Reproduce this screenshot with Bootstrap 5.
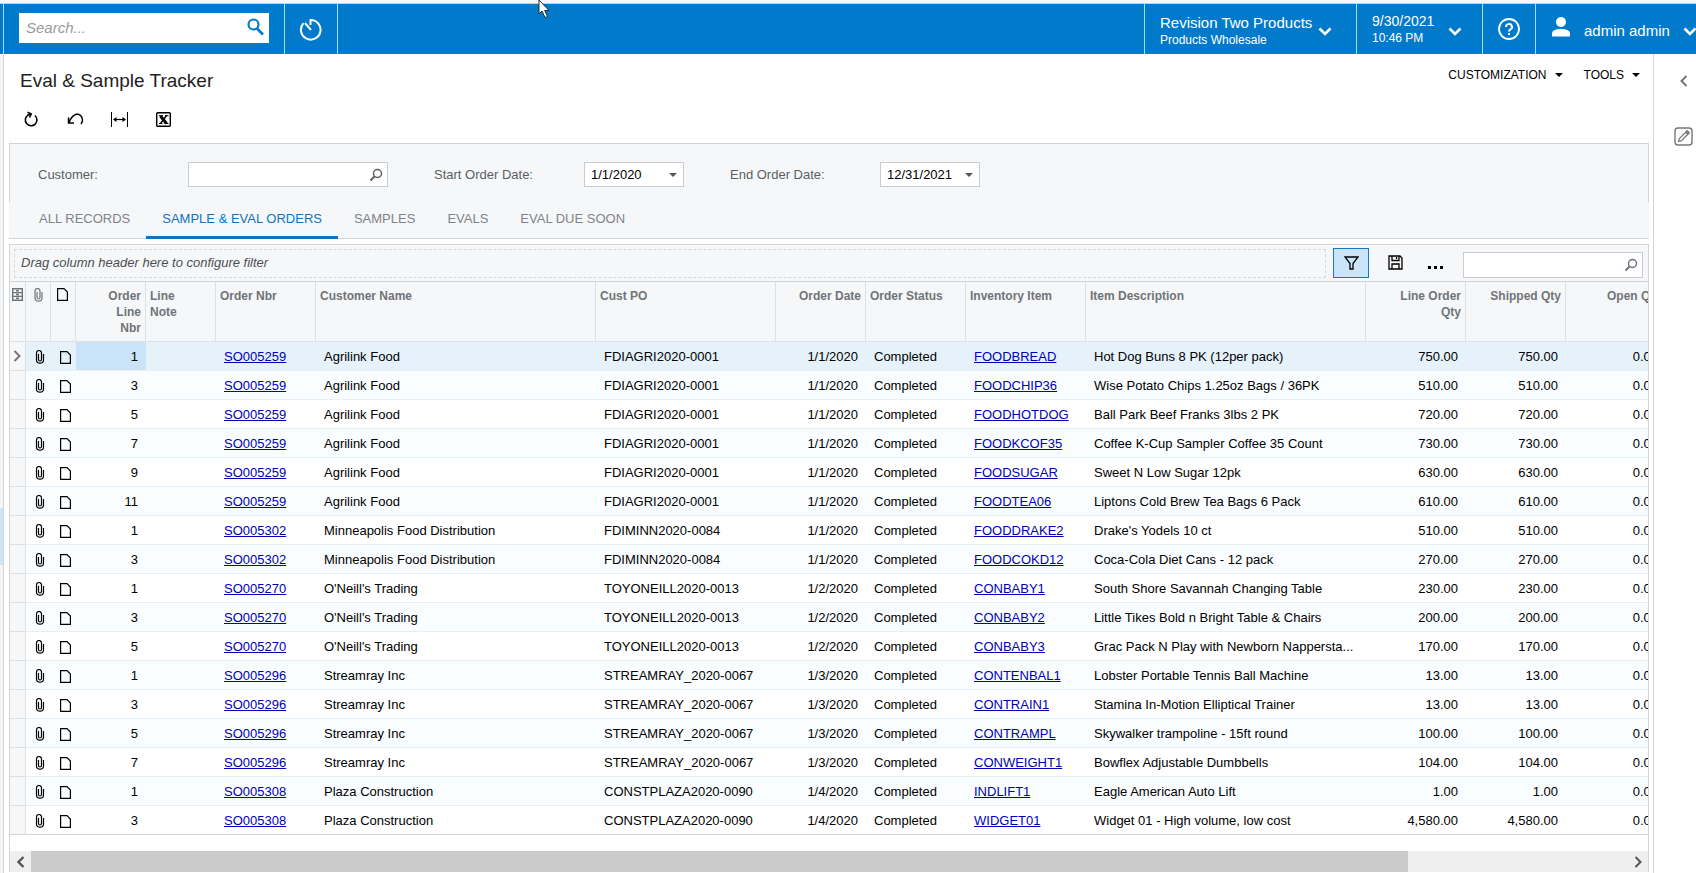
<!DOCTYPE html>
<html lang="en">
<head>
<meta charset="utf-8">
<meta name="viewport" content="width=device-width, initial-scale=1">
<title>Eval &amp; Sample Tracker</title>
<link href="https://cdn.jsdelivr.net/npm/bootstrap@5.3.0/dist/css/bootstrap.min.css" rel="stylesheet">
<style>
  :root { --brand: #027acc; --panel: #f5f7f9; --line: #d2d4d6; --cell: #dde1e5; }
  body { font-family: "Liberation Sans", Arial, sans-serif; font-size: 13px; line-height: 16px; color: #000; background: #fff; }
  svg { display: block; flex: none; fill: none; stroke: currentColor; }
  button { font: inherit; color: inherit; background: none; border: 0; padding: 0; }
  input { font: inherit; color: #000; border: 0; background: transparent; outline: 0; min-width: 0; padding: 0; }

  .window-edge { height: 4px; background: #f6f6f6; border-bottom: 1px solid #c8cdd2; }
  .pointer { position: absolute; left: 538px; top: 0; z-index: 5; }
  .topbar { height: 50px; background: var(--brand); color: #fff; padding-left: 3px; }
  .topbar > * { border-left: 1px solid #a9dcf5; }
  .global-search { width: 281px; padding: 9px 15px 11px; }
  .global-search .field { background: #fff; padding: 0 5px 2px 7px; color: var(--brand); }
  .global-search input { font-size: 15px; font-style: italic; color: #000; padding-top: 2px; }
  .global-search input::placeholder { color: #9a9a9a; opacity: 1; }
  .icon-seg { width: 53px; }
  .org-seg { width: 212px; padding: 4px 24px 0 15px; }
  .date-seg { width: 126px; padding: 0 20px 0 15px; }
  .user-seg { width: 161px; padding-left: 15px; gap: 13px; }
  .seg-main { font-size: 15px; line-height: 18px; }
  .seg-date { font-size: 14px; line-height: 18px; }
  .seg-sub { font-size: 12px; line-height: 16px; }

  .left-rail { width: 4px; background: #f4f5f6; border-right: 1px solid var(--line); padding-top: 454px; }
  .left-mark { height: 57px; background: #cde4f7; }
  .right-rail { width: 43px; border-left: 1px solid var(--line); color: #777; padding: 21px 0 0 20px; }
  .right-rail button + button { margin: 40px 0 0 0; }
  .right-rail button:first-child { margin-left: 6px; }
  .work { padding: 0 4px 0 5px; }
  .title-row { padding: 13px 9px 0 11px; height: 46px; }
  .title-row h1 { font-size: 19px; line-height: 28px; font-weight: 400; color: #222; }
  .title-menu { font-size: 12px; gap: 21px; }
  .title-menu button { gap: 8px; }
  .caret { border: 4px solid transparent; border-top-color: currentColor; border-bottom: 0; width: 0; height: 0; }
  .toolbar { height: 43px; padding: 5px 8px 0; gap: 16px; }
  .tool { width: 28px; height: 28px; display: flex; align-items: center; justify-content: center; }

  .criteria { background: var(--panel); border: 1px solid var(--line); border-bottom: 0; height: 59px; padding: 18px 28px 0; gap: 46px; color: #5b5f63; }
  .criteria label { width: 150px; }
  .field-box { background: #fff; border: 1px solid #c9ccd0; height: 25px; }
  .w-long { width: 200px; padding: 0 4px; }
  .w-date { width: 100px; padding: 0 6px; color: #555; }
  .view-tabs { background: var(--panel); height: 37px; border-bottom: 1px solid var(--line); padding-left: 14px; flex-wrap: nowrap; }
  .view-tabs .nav-link { font-size: 13px; line-height: 18px; padding: 8px 16px; height: 37px; color: #808488; border-bottom: 3px solid transparent; }
  .view-tabs .nav-link.active { color: #1273bb; border-color: #1273bb; }

  .grid-panel { border: 1px solid var(--line); border-bottom: 0; margin-top: 5px; }
  .band { background: var(--panel); }
  .filter-row { height: 37px; border-bottom: 1px solid var(--line); padding: 3px 5px 3px 4px; }
  .drop-zone { border: 1px dashed #d6d8da; height: 29px; margin-top: 1px; padding: 5px 6px; font-style: italic; color: #4c4f52; }
  .filter-tools { gap: 12px; margin: 0 14px 0 7px; }
  .btn-filter { width: 36px; height: 30px; background: #cbe4f7; border: 1px solid #1379c0; }
  .quick { width: 180px; height: 26px; padding: 0 4px; }
  .grid-table { width: 1655px; table-layout: fixed; border-collapse: separate; border-spacing: 0; color: #000; }
  .grid-table > :not(caption) > * > * { box-shadow: none; white-space: nowrap; overflow: hidden; text-overflow: ellipsis; }
  .grid-table thead th { font-size: 12px; height: 60px; padding: 6px 4px 0; vertical-align: top; color: #707478; background: var(--panel); border-right: 1px solid var(--cell); border-bottom: 1px solid var(--cell); text-overflow: clip; }
  .grid-table tbody td { height: 29px; padding: 2px 8px 0; vertical-align: middle; border-bottom: 1px solid #e6f0f7; }
  .grid-table tbody tr:nth-child(even) td { background: #fafdff; }
  .grid-table tbody tr:first-child td { background: #e5f2fa; }
  .grid-table tbody tr td:first-child { background: var(--panel); border-right: 1px solid var(--cell); border-bottom-color: var(--cell); padding: 0 3px; color: #777; }
  .grid-table tbody tr:first-child td.picked { background: #cbe3f6; }
  .grid-table tbody tr:last-child td { border-bottom-color: var(--line); }
  .grid-table a { color: #0000b4; text-decoration: underline; text-underline-offset: 1px; }
  .grid-table th.ico { padding: 6px 0 0 6px; }
  .grid-table th.ico.first { padding-left: 2px; }
  .grid-table td.ico { padding: 2px 0 0 9px; }
  .hscroll { margin-top: 16px; height: 21px; background: #efefef; color: #555; }
  .hscroll button { width: 21px; display: flex; align-items: center; justify-content: center; }
  .hscroll .thumb { background: #cbcbcb; flex: 63 0 0; }
  .hscroll .rest { flex: 10 0 0; }
</style>
</head>
<body class="overflow-hidden min-vh-100 d-flex flex-column position-relative">

<svg width="0" height="0" class="position-absolute" aria-hidden="true">
  <symbol id="clip" viewBox="0 0 10 14"><path d="M3.500 4v5.500a1.500 1.500 0 0 0 3 0V3a2.200 2.200 0 0 0-5 0v7a3.500 3.200 0 0 0 7 0V4" stroke-width="1.200"/></symbol>
  <symbol id="note" viewBox="0 0 11 13"><path d="M.6 .6h6.400l3.400 3.400v8.400H.6z" stroke-width="1.200"/></symbol>
  <symbol id="lens" viewBox="0 0 14 14"><circle cx="8.500" cy="5.500" r="4" stroke-width="1.500"/><path d="M5.500 8.500L1.500 12.500" stroke-width="2"/></symbol>
  <symbol id="down" viewBox="0 0 14 9"><path d="M1.500 1.500L7 7l5.500-5.500" stroke-width="2.600"/></symbol>
  <symbol id="right" viewBox="0 0 8 12"><path d="M1.500 1L6.500 6l-5 5" stroke-width="2"/></symbol>
</svg>

<div class="window-edge"></div>
<svg class="pointer" width="13" height="19" viewBox="0 0 13 19" aria-hidden="true"><path d="M1 0v14l3-3 3 6.500 2.500-1L6.700 10.500H11z" fill="#fff" stroke="#1b2c3c"/></svg>

<header class="topbar d-flex">
  <form class="global-search">
    <div class="field d-flex align-items-center h-100">
      <input class="flex-grow-1" type="search" placeholder="Search..." aria-label="Search">
      <svg width="17" height="18" viewBox="0 0 17 18"><circle cx="6.500" cy="6.500" r="5" stroke-width="2.200"/><path d="M10 10.500l6 6" stroke-width="2.600"/></svg>
    </div>
  </form>
  <button class="icon-seg d-flex align-items-center justify-content-center" aria-label="Recent">
    <svg width="24" height="24" viewBox="0 0 24 24" stroke-width="2"><path d="M11.500 8V3a9.800 9.800 0 1 1-7 3.200M6 6l6 7"/></svg>
  </button>
  <div class="flex-grow-1"></div>
  <button class="org-seg d-flex align-items-center justify-content-between text-start text-nowrap">
    <span><span class="seg-main d-block">Revision Two Products</span><span class="seg-sub d-block">Products Wholesale</span></span>
    <svg width="14" height="9"><use href="#down"/></svg>
  </button>
  <button class="date-seg d-flex align-items-center justify-content-between text-start text-nowrap">
    <span><span class="seg-date d-block">9/30/2021</span><span class="seg-sub d-block">10:46 PM</span></span>
    <svg width="14" height="9" class="mt-1"><use href="#down"/></svg>
  </button>
  <button class="icon-seg d-flex align-items-center justify-content-center" aria-label="Help">
    <svg width="24" height="24" viewBox="0 0 24 24" stroke-width="1.800"><circle cx="12" cy="12" r="10"/><path d="M9 10a3 2.800 0 1 1 4.500 2.300C12.300 13 12 13.400 12 14.500M12 16v2" stroke-width="2"/></svg>
  </button>
  <button class="user-seg d-flex align-items-center overflow-hidden text-nowrap">
    <svg width="20" height="20" viewBox="0 0 20 20" class="mb-1"><circle cx="10" cy="5" r="5" fill="#fff" stroke="none"/><path d="M1 19.500v-3q0-4.500 9-4.500t9 4.500v3z" fill="#fff" stroke="none"/></svg>
    <span class="seg-main pt-1">admin admin</span>
    <svg width="14" height="9" class="mt-1"><use href="#down"/></svg>
  </button>
</header>

<div class="d-flex flex-grow-1">
  <div class="left-rail flex-shrink-0"><div class="left-mark"></div></div>

  <main class="work flex-grow-1 overflow-hidden">
    <div class="title-row d-flex justify-content-between align-items-start">
      <h1 class="mb-0">Eval &amp; Sample Tracker</h1>
      <div class="title-menu d-flex">
        <button class="d-flex align-items-center">CUSTOMIZATION <span class="caret"></span></button>
        <button class="d-flex align-items-center">TOOLS <span class="caret"></span></button>
      </div>
    </div>

    <div class="toolbar d-flex">
      <button class="tool" aria-label="Refresh"><svg width="16" height="16" viewBox="0 0 16 16" stroke-width="1.600"><path d="M11.800 4.500a5.800 5.800 0 1 1-6.800-.4"/><path d="M4.500 1.300l3.700 1.600-1.600 3.600M4.300 4.200l3.900-1.300"/></svg></button>
      <button class="tool" aria-label="Undo"><svg width="17" height="14" viewBox="0 0 17 14" stroke-width="1.500"><path d="M2 10.500Q5 3 10 2q5 .5 5.500 6 0 2-1.500 4M1.500 5.500v5.500H7"/></svg></button>
      <button class="tool" aria-label="Fit columns"><svg width="17" height="15" viewBox="0 0 17 15"><path d="M.500 0v15M16.500 0v15" /><path d="M3 7.500h11" stroke-width="1.200"/><path d="M5.500 5v5l-3.500-2.500zM11.500 5v5l3.500-2.500z" fill="currentColor" stroke="none"/></svg></button>
      <button class="tool" aria-label="Export to Excel"><svg width="15" height="15" viewBox="0 0 15 15"><rect x=".7" y=".7" width="13.600" height="13.600" rx="1" stroke-width="1.400"/><path d="M4.500 4l6 7.500" stroke-width="3"/><path d="M10.500 3.500l-6 8" stroke-width="1.400"/><path d="M3 3.700h4M9 3.700h3.500M3 11.500h3.500M8.500 11.500h4"/></svg></button>
    </div>

    <form class="criteria d-flex align-items-start">
      <div class="d-flex align-items-center">
        <label for="customer">Customer:</label>
        <div class="field-box w-long d-flex align-items-center"><input id="customer" class="flex-grow-1" type="text"><svg width="14" height="14"><use href="#lens"/></svg></div>
      </div>
      <div class="d-flex align-items-center">
        <label for="start">Start Order Date:</label>
        <div class="field-box w-date d-flex align-items-center"><input id="start" class="flex-grow-1" type="text" value="1/1/2020"><span class="caret"></span></div>
      </div>
      <div class="d-flex align-items-center">
        <label for="end">End Order Date:</label>
        <div class="field-box w-date d-flex align-items-center"><input id="end" class="flex-grow-1" type="text" value="12/31/2021"><span class="caret"></span></div>
      </div>
    </form>

    <nav class="view-tabs nav text-nowrap">
      <a class="nav-link" href="#">ALL RECORDS</a>
      <a class="nav-link active" href="#" aria-current="page">SAMPLE &amp; EVAL ORDERS</a>
      <a class="nav-link" href="#">SAMPLES</a>
      <a class="nav-link" href="#">EVALS</a>
      <a class="nav-link" href="#">EVAL DUE SOON</a>
    </nav>

    <section class="grid-panel">
      <div class="filter-row band d-flex align-items-start">
        <div class="drop-zone flex-grow-1">Drag column header here to configure filter</div>
        <div class="filter-tools d-flex">
          <button class="btn-filter d-flex align-items-center justify-content-center" aria-label="Filter"><svg width="15" height="14" viewBox="0 0 15 14" stroke-width="1.300"><path d="M1 1h13L9 7.500V13H6V7.500z"/></svg></button>
          <button class="tool" aria-label="Save filter"><svg width="15" height="15" viewBox="0 0 15 15" stroke-width="1.300"><path d="M1 1h11l2 2v11H1z"/><path d="M4 1v4.500h7V1M8.500 2v2M4 14V9h7v5"/></svg></button>
          <button class="tool pt-1" aria-label="More"><svg width="17" height="14" viewBox="0 0 17 14"><path d="M1 9h3v3H1zM7 9h3v3H7zM13 9h3v3h-3z" fill="currentColor" stroke="none"/></svg></button>
        </div>
        <div class="field-box quick mt-1 d-flex align-items-center text-secondary"><input class="flex-grow-1" type="text" aria-label="Find in grid"><svg width="14" height="14"><use href="#lens"/></svg></div>
      </div>

      <div class="overflow-hidden">
        <table class="table grid-table mb-0">
          <colgroup>
            <col style="width:16px"><col style="width:25px"><col style="width:25px"><col style="width:70px"><col style="width:70px"><col style="width:100px"><col style="width:280px"><col style="width:180px"><col style="width:90px"><col style="width:100px"><col style="width:120px"><col style="width:280px"><col style="width:100px"><col style="width:100px"><col style="width:100px">
          </colgroup>
          <thead>
            <tr>
              <th class="ico first" aria-label="Row settings"><svg width="11" height="13" viewBox="0 0 11 13" stroke-width="1.400"><path d="M.700 .700h9.600v11.600H.700zM1 4.600h9M1 8.400h9M4 2.700h3M4 6.500h3M4 10.300h3"/></svg></th>
              <th class="ico" aria-label="Files"><svg width="13" height="14"><use href="#clip"/></svg></th>
              <th class="ico text-black" aria-label="Notes"><svg width="11" height="13"><use href="#note"/></svg></th>
              <th class="text-end">Order<br>Line<br>Nbr</th>
              <th>Line<br>Note</th>
              <th>Order Nbr</th>
              <th>Customer Name</th>
              <th>Cust PO</th>
              <th class="text-end">Order Date</th>
              <th>Order Status</th>
              <th>Inventory Item</th>
              <th>Item Description</th>
              <th class="text-end">Line Order<br>Qty</th>
              <th class="text-end">Shipped Qty</th>
              <th class="text-end">Open Qty</th>
            </tr>
          </thead>
          <tbody id="rows"></tbody>
        </table>
      </div>

      <div class="hscroll d-flex">
        <button aria-label="Scroll left"><svg width="8" height="12" viewBox="0 0 8 12"><path d="M6.500 1L1.500 6l5 5" stroke-width="2.400"/></svg></button>
        <div class="flex-grow-1 d-flex"><div class="thumb"></div><div class="rest"></div></div>
        <button aria-label="Scroll right"><svg width="8" height="12"><use href="#right"/></svg></button>
      </div>
    </section>
  </main>

  <aside class="right-rail flex-shrink-0">
    <button class="d-block" aria-label="Expand panel"><svg width="8" height="12" viewBox="0 0 8 12"><path d="M6.500 1L1.500 6l5 5" stroke-width="2"/></svg></button>
    <button class="d-block" aria-label="Edit"><svg width="19" height="19" viewBox="0 0 19 19"><rect x="1" y="1" width="17" height="17" rx="3" stroke-width="1.400"/><path d="M4.500 14.500l.8-3 7.500-7.500 2.200 2.200-7.500 7.500zM11.500 5.500l2 2" stroke-width="1.200"/><path d="M12 4.500l1.300-1 2 2-1 1.300z" fill="currentColor"/></svg></button>
  </aside>
</div>

<script src="https://cdn.jsdelivr.net/npm/bootstrap@5.3.0/dist/js/bootstrap.bundle.min.js"></script>
<script>
  // One entry per order: number, customer, customer PO, date, then lines of [nbr, item, description, qty]
  const orders = [
    ["SO005259", "Agrilink Food", "FDIAGRI2020-0001", "1/1/2020", [
      [1, "FOODBREAD", "Hot Dog Buns 8 PK (12per pack)", "750.00"],
      [3, "FOODCHIP36", "Wise Potato Chips 1.25oz Bags / 36PK", "510.00"],
      [5, "FOODHOTDOG", "Ball Park Beef Franks 3lbs 2 PK", "720.00"],
      [7, "FOODKCOF35", "Coffee K-Cup Sampler Coffee 35 Count", "730.00"],
      [9, "FOODSUGAR", "Sweet N Low Sugar 12pk", "630.00"],
      [11, "FOODTEA06", "Liptons Cold Brew Tea Bags 6 Pack", "610.00"]]],
    ["SO005302", "Minneapolis Food Distribution", "FDIMINN2020-0084", "1/1/2020", [
      [1, "FOODDRAKE2", "Drake's Yodels 10 ct", "510.00"],
      [3, "FOODCOKD12", "Coca-Cola Diet Cans - 12 pack", "270.00"]]],
    ["SO005270", "O'Neill's Trading", "TOYONEILL2020-0013", "1/2/2020", [
      [1, "CONBABY1", "South Shore Savannah Changing Table", "230.00"],
      [3, "CONBABY2", "Little Tikes Bold n Bright Table & Chairs", "200.00"],
      [5, "CONBABY3", "Grac Pack N Play with Newborn Nappersta...", "170.00"]]],
    ["SO005296", "Streamray Inc", "STREAMRAY_2020-0067", "1/3/2020", [
      [1, "CONTENBAL1", "Lobster Portable Tennis Ball Machine", "13.00"],
      [3, "CONTRAIN1", "Stamina In-Motion Elliptical Trainer", "13.00"],
      [5, "CONTRAMPL", "Skywalker trampoline - 15ft round", "100.00"],
      [7, "CONWEIGHT1", "Bowflex Adjustable Dumbbells", "104.00"]]],
    ["SO005308", "Plaza Construction", "CONSTPLAZA2020-0090", "1/4/2020", [
      [1, "INDLIFT1", "Eagle American Auto Lift", "1.00"],
      [3, "WIDGET01", "Widget 01 - High volume, low cost", "4,580.00"]]]
  ];
  let html = "", first = true;
  for (const [nbr, customer, po, date, lines] of orders) {
    for (const [line, item, text, qty] of lines) {
      html += `<tr>
        <td>${first ? '<svg width="8" height="12"><use href="#right"/></svg>' : ""}</td>
        <td class="ico"><svg width="10" height="14"><use href="#clip"/></svg></td>
        <td class="ico"><svg width="11" height="13"><use href="#note"/></svg></td>
        <td class="text-end${first ? " picked" : ""}">${line}</td><td></td>
        <td><a href="#">${nbr}</a></td><td>${customer}</td><td>${po}</td>
        <td class="text-end">${date}</td><td>Completed</td>
        <td><a href="#">${item}</a></td><td>${text.replace("&", "&amp;")}</td>
        <td class="text-end">${qty}</td><td class="text-end">${qty}</td><td class="text-end">0.00</td></tr>`;
      first = false;
    }
  }
  document.getElementById("rows").innerHTML = html;
</script>
</body>
</html>
